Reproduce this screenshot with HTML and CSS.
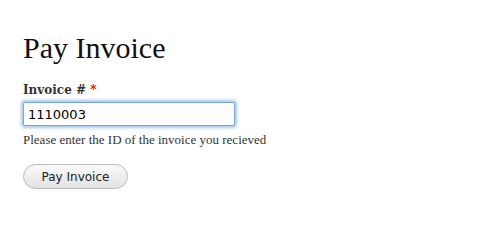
FILE: index.html
```html
<!DOCTYPE html>
<html lang="en">
<head>
    <meta charset="UTF-8">
    <title>Pay Invoice</title>
    <link rel="stylesheet" href="styles.css">
</head>
<body>
<div class="page">
    <h1 class="title">Pay Invoice</h1>
    <form class="form">
        <label class="label" for="invoice">Invoice # <span class="req">*</span></label>
        <input id="invoice" class="field" type="text" value="1110003" autofocus>
        <p class="help">Please enter the ID of the invoice you recieved</p>
        <button class="btn" type="button">Pay Invoice</button>
    </form>
</div>
</body>
</html>
```

FILE: styles.css
```css
body{margin:0;background:#fff;font-family:"Liberation Serif","Times New Roman",serif;color:#222;}
.page{padding:30px 23px;}
.title{margin:0;font-size:30px;font-weight:normal;color:#111;line-height:36px;}
.form{margin-top:16px;display:flex;flex-direction:column;align-items:flex-start;}
.label{font-family:"DejaVu Serif",Georgia,serif;font-size:12px;font-weight:bold;color:#333;line-height:16px;}
.req{color:#e00;}
.field{margin-top:4px;width:202px;height:20px;padding:1px 4px;border:1px solid #7ba7d8;border-radius:2px;box-shadow:0 0 3px 2px #a9c9ee;font-family:"DejaVu Sans","Open Sans",sans-serif;font-size:13px;color:#000;outline:none;caret-color:#000;}
.help{margin:6px 0 0;font-size:13px;color:#333;line-height:15px;}
.btn{margin-top:17px;width:105px;height:25px;border:1px solid #bbb;border-radius:13px;background:linear-gradient(#fafafa,#e2e2e2);font-family:"DejaVu Sans","Open Sans",sans-serif;font-size:12px;color:#222;padding:0;}
```
